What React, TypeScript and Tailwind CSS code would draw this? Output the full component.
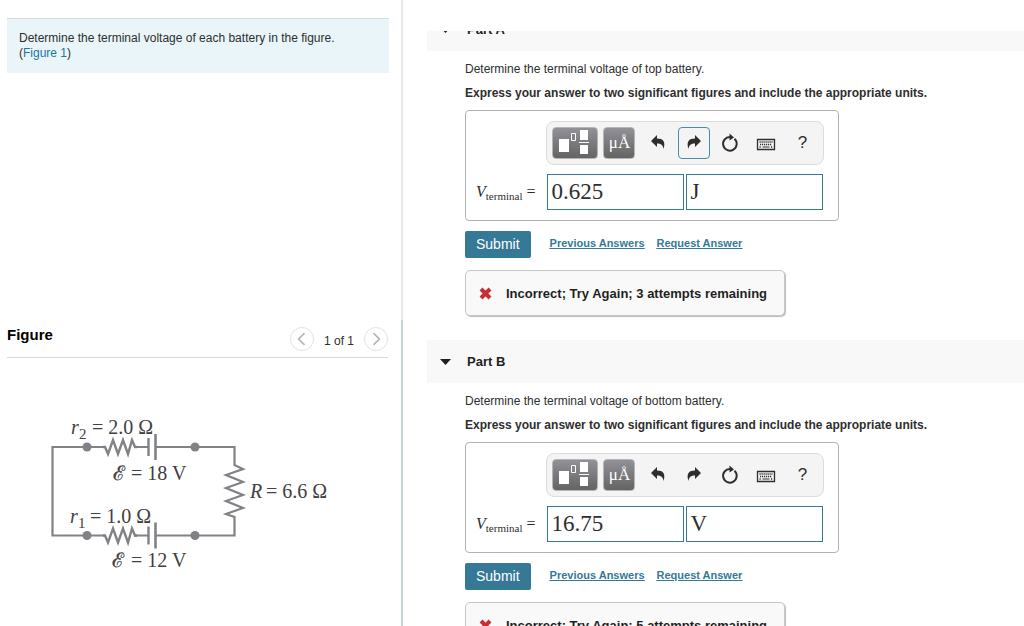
import { useState } from "react";
import type { ReactNode } from "react";

type Part = {
  id: string;
  title: string;
  prompt: string;
  value: string;
  units: string;
  attempts: number;
  activeTool?: string;
};

const INSTRUCTION =
  "Express your answer to two significant figures and include the appropriate units.";

const PARTS: Part[] = [
  {
    id: "a",
    title: "Part A",
    prompt: "Determine the terminal voltage of top battery.",
    value: "0.625",
    units: "J",
    attempts: 3,
    activeTool: "Redo",
  },
  {
    id: "b",
    title: "Part B",
    prompt: "Determine the terminal voltage of bottom battery.",
    value: "16.75",
    units: "V",
    attempts: 5,
  },
];

export default function App() {
  return (
    <div className="grid h-screen grid-cols-[403fr_621fr] overflow-hidden bg-white font-['Liberation_Sans',Arial,sans-serif] text-[12px] text-[#2e2e2e]">
      <aside className="flex min-w-0 flex-col">
        <div className="h-80 shrink-0 border-r-2 border-[#e4e8ef] pt-[18px] pr-3 pl-[7px]">
          <div className="border-t border-[#dadada] bg-[#e9f5f8] px-3 py-3 leading-[15px]">
            <p>Determine the terminal voltage of each battery in the figure.</p>
            <p>
              (
              <a href="#figure" className="text-[#23759c]">
                Figure 1
              </a>
              )
            </p>
          </div>
        </div>
        <FigurePanel />
      </aside>

      <main className="flex min-w-0 flex-col pt-[31px] pl-6">
        <div className="min-h-0 flex-1 overflow-hidden">
          {/* first header is partly scrolled under the top edge */}
          <div className="-mt-[23px]">
            {PARTS.map((p) => (
              <PartSection key={p.id} part={p} />
            ))}
          </div>
        </div>
      </main>
    </div>
  );
}

function FigurePanel() {
  return (
    <section
      id="figure"
      className="flex-1 border-r-2 border-[#c3d0e2] pr-[13px] pl-[7px]"
    >
      <div className="flex h-[38px] items-end justify-between border-b border-[#d9d9d9] pb-[6px]">
        <h2 className="pb-[6px] text-[15px] leading-5 font-bold text-black">Figure</h2>
        <div className="flex items-center gap-[10px]">
          <PagerButton label="Previous figure">
            <path d="M15 5 8 12l7 7" />
          </PagerButton>
          <span className="pt-1">1 of 1</span>
          <PagerButton label="Next figure">
            <path d="m9 5 7 7-7 7" />
          </PagerButton>
        </div>
      </div>
      <Circuit />
    </section>
  );
}

function PagerButton({ label, children }: { label: string; children: ReactNode }) {
  return (
    <button
      type="button"
      aria-label={label}
      className="flex h-6 w-6 items-center justify-center rounded-full border border-[#e2e2e2]"
    >
      <svg viewBox="0 0 24 24" className="h-5 w-5 fill-none stroke-[#b4b4b4] stroke-2">
        {children}
      </svg>
    </button>
  );
}

function Circuit() {
  return (
    <svg
      viewBox="0 0 300 170"
      className="mt-[52px] ml-[33px] w-[300px] font-['Liberation_Serif',serif]"
      role="img"
      aria-label="Two batteries with internal resistance connected to a resistor"
    >
      <g fill="none" stroke="#808285" strokeWidth="2.200">
        <path d="M64 37H12.500v88.500h52M94 37h14M94 125.500h14" />
        <path
          d="M63 37h2l3 7 5-14 5 14 5-14 5 14 4-14 3 7h2M63 125.500h2l3 7 5-14 5 14 5-14 5 14 4-14 3 7h2"
          strokeWidth="2.400"
        />
        <path d="M108.500 28v18M108.500 116.500v18" strokeWidth="2.400" />
        <path d="M115.500 24v26M115.500 112.500v26" strokeWidth="2.600" />
        <path d="M116 37h78.500v18l8.500 4-17 6 17 7-17 6 17 7-17 6 17 7-17 6 8.500 3v18.500h-78.500" />
      </g>
      <g fill="#808285">
        <circle cx="47" cy="37" r="4.500" />
        <circle cx="155" cy="37" r="4.500" />
        <circle cx="47" cy="125.500" r="4.500" />
        <circle cx="155" cy="125.500" r="4.500" />
      </g>
      <g fill="#414042" fontSize="20">
        <text x="31" y="24" fontStyle="italic">r</text>
        <text x="39" y="29" fontSize="15">2</text>
        <text x="52" y="24">= 2.0 Ω</text>
        <text x="30" y="113" fontStyle="italic">r</text>
        <text x="38" y="118" fontSize="15">1</text>
        <text x="50" y="113">= 1.0 Ω</text>
        <text x="73" y="70" stroke="#414042" strokeWidth="0.300">ℰ</text>
        <text x="91" y="70">= 18 V</text>
        <text x="72" y="157" stroke="#414042" strokeWidth="0.300">ℰ</text>
        <text x="91" y="157">= 12 V</text>
        <text x="210" y="88" fontStyle="italic">R</text>
        <text x="226" y="88">= 6.6 Ω</text>
      </g>
    </svg>
  );
}

function PartSection({ part }: { part: Part }) {
  const [value, setValue] = useState(part.value);
  const [units, setUnits] = useState(part.units);
  const valueId = `value-${part.id}`;

  return (
    <section className="pb-6">
      <button
        type="button"
        aria-expanded="true"
        className="flex h-[43px] w-full items-center gap-4 bg-[#f8f8f8] pl-[13px] text-left text-[13px] font-bold text-[#1f1f1f]"
      >
        <svg viewBox="0 0 11 6" className="h-[6px] w-[11px] fill-[#1f1f1f]">
          <path d="M0 0h11L5.500 6z" />
        </svg>
        {part.title}
      </button>

      <div className="pt-[10px] pr-4 pl-[38px]">
        <p className="leading-4">{part.prompt}</p>
        <p className="mt-2 leading-4 font-bold">{INSTRUCTION}</p>

        <div className="mt-[9px] grid w-fit grid-cols-[auto_auto] items-center gap-x-[11px] gap-y-[9px] rounded-[4px] border border-[#b2b2b2] py-[10px] pr-[14px] pl-[10px]">
          <Toolbar active={part.activeTool} />
          <label
            htmlFor={valueId}
            className="col-start-1 font-['Liberation_Serif',serif] text-[16px] leading-5 whitespace-nowrap"
          >
            <i>V</i>
            <sub className="text-[11px]">terminal</sub> =
          </label>
          <div className="flex gap-[2px] px-px">
            <AnswerInput id={valueId} value={value} onChange={setValue} />
            <AnswerInput
              id={`units-${part.id}`}
              label="Units"
              value={units}
              onChange={setUnits}
            />
          </div>
        </div>

        <div className="mt-[10px] flex items-center">
          <button
            type="button"
            className="h-[27px] rounded-[2px] bg-[#357997] px-[11px] text-[14px] text-white"
          >
            Submit
          </button>
          <div className="ml-[19px] flex gap-3 pb-[2px] text-[11px] font-bold text-[#357997] underline">
            <a href="#previous">Previous Answers</a>
            <a href="#request">Request Answer</a>
          </div>
        </div>

        <div className="mt-3 flex h-[46px] w-fit items-center gap-[14px] rounded-[5px] border border-[#c6c6c6] bg-[#f9f9f9] pt-px pr-[17px] pl-[13px] text-[13px] font-bold text-[#1f1f1f] shadow-[1px_1px_1px_#bdbdbd]">
          <svg viewBox="0 0 13 13" className="h-[13px] w-[13px] stroke-[#cc2b31] stroke-4">
            <path d="m2 2 9 9M11 2l-9 9" />
          </svg>
          Incorrect; Try Again; {part.attempts} attempts remaining
        </div>
      </div>
    </section>
  );
}

function AnswerInput({
  id,
  label,
  value,
  onChange,
}: {
  id: string;
  label?: string;
  value: string;
  onChange: (v: string) => void;
}) {
  return (
    <input
      id={id}
      aria-label={label}
      value={value}
      onChange={(e) => onChange(e.target.value)}
      className="h-9 w-[137px] border border-[#357997] bg-white px-[3px] font-['Liberation_Serif',serif] text-[23px] text-[#2e2e2e] outline-none"
    />
  );
}

function Toolbar({ active }: { active?: string }) {
  return (
    <div className="col-start-2 flex h-11 items-center rounded-[8px] border border-[#dcdcdc] bg-[#f4f4f4] px-[5px]">
      <button
        type="button"
        aria-label="Templates"
        className="h-8 w-[46px] rounded-[4px] border border-[#b5b5b8] bg-linear-to-b from-[#929198] to-[#646464]"
      >
        <svg viewBox="0 0 44 30" className="h-[30px] w-11 fill-white">
          <path d="M6 11h10v13H6zM27 2h8v10h-8zM27 17h8v9h-8zM26 14h10v1H26z" />
          <path d="M18.500 5.500h4v7h-4z" fill="none" stroke="#fff" />
        </svg>
      </button>
      <button
        type="button"
        aria-label="Units"
        className="ml-[5px] h-8 w-8 rounded-[4px] border border-[#b5b5b8] bg-linear-to-b from-[#929198] to-[#646464] font-['Liberation_Serif',serif] text-[17px] text-white"
      >
        μÅ
      </button>
      <div className="ml-[7px] flex gap-1">
        <ToolButton label="Undo" active={active}>
          <path d="M3 8l6-6v3.500c6 0 9 3 6.500 10.500-0.500-4-2.500-5.500-6.500-5.500V14z" />
        </ToolButton>
        <ToolButton label="Redo" active={active}>
          <path d="M17 8l-6-6v3.500C5 5.500 2 8.500 4.500 16c0.500-4 2.500-5.500 6.500-5.500V14z" />
        </ToolButton>
        <ToolButton label="Reset" active={active}>
          <path
            d="M14.500 5.800A6.800 6.800 0 1 1 10 4"
            fill="none"
            stroke="currentColor"
            strokeWidth="2"
          />
          <path d="M9.500 0.500l4.500 4-4.500 3z" />
        </ToolButton>
        <ToolButton label="Keyboard" active={active}>
          <path
            d="M1.500 6.500h17v10h-17z"
            fill="none"
            stroke="currentColor"
            strokeWidth="1.300"
          />
          <path
            d="M3.500 9h13M4 11.500h12M3.500 14h2M15 14h2"
            stroke="currentColor"
            strokeDasharray="1.200 0.800"
            strokeWidth="1.400"
          />
          <path d="M6.500 13.500h7v1h-7z" />
        </ToolButton>
        <button
          type="button"
          aria-label="Help"
          className="h-8 w-8 text-[17px] text-[#2e2e2e]"
        >
          ?
        </button>
      </div>
    </div>
  );
}

function ToolButton({
  label,
  active,
  children,
}: {
  label: string;
  active?: string;
  children: ReactNode;
}) {
  return (
    <button
      type="button"
      aria-label={label}
      className={`flex h-8 w-8 items-center justify-center rounded-[4px] border ${
        active === label ? "border-[#4a8bab]" : "border-transparent"
      }`}
    >
      <svg viewBox="0 0 20 20" className="h-5 w-5 fill-current text-[#2e2e2e]">
        {children}
      </svg>
    </button>
  );
}
